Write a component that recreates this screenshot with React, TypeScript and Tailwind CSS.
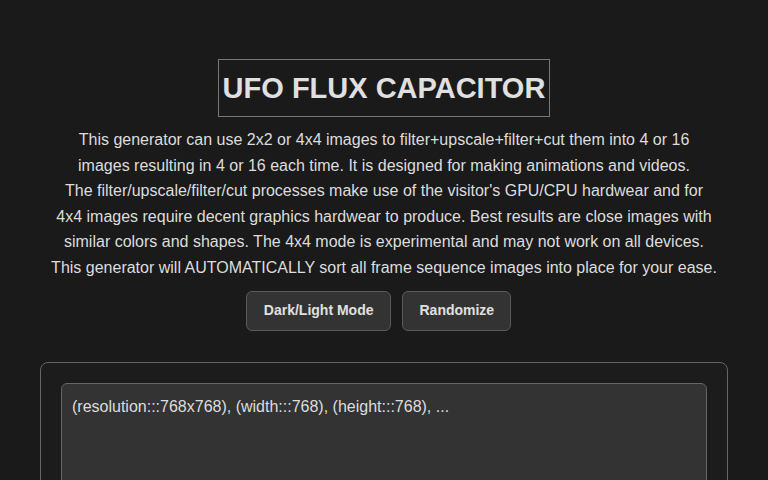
export default function App() {
  const lines = [
    "This generator can use 2x2 or 4x4 images to filter+upscale+filter+cut them into 4 or 16",
    "images resulting in 4 or 16 each time. It is designed for making animations and videos.",
    "The filter/upscale/filter/cut processes make use of the visitor's GPU/CPU hardwear and for",
    "4x4 images require decent graphics hardwear to produce. Best results are close images with",
    "similar colors and shapes. The 4x4 mode is experimental and may not work on all devices.",
    "This generator will AUTOMATICALLY sort all frame sequence images into place for your ease.",
  ];

  return (
    <div className="min-h-[480px] bg-[#1a1a1a] text-[#dddddd] font-['Liberation_Sans',Arial,sans-serif] px-10 pt-[59px]">
      <div className="flex flex-col items-center">
        <h1 className="border border-[#777777] px-[4px] pt-[2px] h-[58px] flex items-center text-[29px] font-bold text-[#e0e0e0]">
          UFO FLUX CAPACITOR
        </h1>
        <p className="mt-[10px] text-center text-[16px] leading-[25.6px]">
          {lines.map((l, i) => (
            <span key={i}>
              {l}
              {i < lines.length - 1 && <br />}
            </span>
          ))}
        </p>
        {/* each button carries a right margin, so the pair sits a bit left of centre */}
        <div className="mt-[10px] flex">
          <button className="mr-[11px] h-10 px-[17px] rounded-md border border-[#5a5a5a] bg-[#333333] text-[14px] font-bold text-[#e0e0e0]">
            Dark/Light Mode
          </button>
          <button className="mr-[11px] h-10 px-4 rounded-md border border-[#5a5a5a] bg-[#333333] text-[14px] font-bold text-[#e0e0e0]">
            Randomize
          </button>
        </div>
      </div>
      <div className="mt-[31px] border border-[#666666] rounded-lg bg-[#1c1c1c] p-5">
        <textarea
          className="w-full h-[160px] block resize-none rounded-md border border-[#666666] bg-[#333333] px-[10px] py-[11px] text-[16px] text-[#dddddd] outline-none"
          defaultValue="(resolution:::768x768), (width:::768), (height:::768), ..."
        />
      </div>
    </div>
  );
}
